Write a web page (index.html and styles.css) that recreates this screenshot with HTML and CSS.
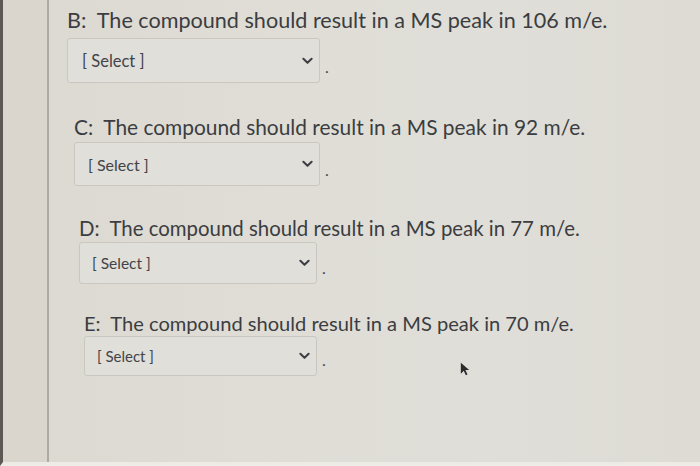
FILE: index.html
```html
<!DOCTYPE html>
<html>
<head>
<meta charset="utf-8">
<link rel="stylesheet" href="styles.css">
</head>
<body>
<div class="screen">
  <div class="gutter"></div>
  <div class="content">
    <div class="question q-b">
      <p class="prompt">B: &nbsp;The compound should result in a MS peak in 106 m/e.</p>
      <div class="answer">
        <div class="select"><span class="select-label">[ Select ]</span><svg class="chevron" viewBox="0 0 12 8" width="11" height="8"><path d="M1.5 1.5 L6 6 L10.5 1.5" fill="none" stroke="#3d3f44" stroke-width="2.2" stroke-linecap="round" stroke-linejoin="round"/></svg></div>
        <span class="period">.</span>
      </div>
    </div>
    <div class="question q-c">
      <p class="prompt">C: &nbsp;The compound should result in a MS peak in 92 m/e.</p>
      <div class="answer">
        <div class="select"><span class="select-label">[ Select ]</span><svg class="chevron" viewBox="0 0 12 8" width="11" height="8"><path d="M1.5 1.5 L6 6 L10.5 1.5" fill="none" stroke="#3d3f44" stroke-width="2.2" stroke-linecap="round" stroke-linejoin="round"/></svg></div>
        <span class="period">.</span>
      </div>
    </div>
    <div class="question q-d">
      <p class="prompt">D: &nbsp;The compound should result in a MS peak in 77 m/e.</p>
      <div class="answer">
        <div class="select"><span class="select-label">[ Select ]</span><svg class="chevron" viewBox="0 0 12 8" width="11" height="8"><path d="M1.5 1.5 L6 6 L10.5 1.5" fill="none" stroke="#3d3f44" stroke-width="2.2" stroke-linecap="round" stroke-linejoin="round"/></svg></div>
        <span class="period">.</span>
      </div>
    </div>
    <div class="question q-e">
      <p class="prompt">E: &nbsp;The compound should result in a MS peak in 70 m/e.</p>
      <div class="answer">
        <div class="select"><span class="select-label">[ Select ]</span><svg class="chevron" viewBox="0 0 12 8" width="11" height="8"><path d="M1.5 1.5 L6 6 L10.5 1.5" fill="none" stroke="#3d3f44" stroke-width="2.2" stroke-linecap="round" stroke-linejoin="round"/></svg></div>
        <span class="period">.</span>
      </div>
    </div>
  </div>
  <svg class="cursor" viewBox="0 0 12 18" width="10" height="15"><path d="M1 1 L1 14 L4.5 10.5 L7 16 L9 15 L6.5 9.5 L11 9.5 Z" fill="#2b2b2e"/></svg>
</div>
</body>
</html>
```
FILE: styles.css
```css
html, body {
  margin: 0;
  padding: 0;
}
body {
  width: 700px;
  height: 466px;
  overflow: hidden;
  background: #dedcd5;
  font-family: Lato, "Open Sans", sans-serif;
  color: #3b3d41;
}
.screen {
  position: relative;
  display: flex;
  width: 700px;
  height: 466px;
  background: linear-gradient(90deg, #dcd9d1 0%, #dfddd6 40%, #e0ded8 70%, #dddbd4 100%);
  border-left: 3px solid #5c5954;
  border-bottom: 4px solid #ecebe6;
  box-sizing: border-box;
}
.gutter {
  width: 44px;
  flex: none;
  border-right: 2px solid #aeaaa2;
  background: #dad6ce;
}
.content {
  flex: 1;
  display: flex;
  flex-direction: column;
}
.prompt {
  margin: 0;
  white-space: nowrap;
}
.answer {
  display: flex;
  align-items: flex-end;
}
.select {
  display: flex;
  align-items: center;
  justify-content: space-between;
  box-sizing: border-box;
  border: 1.5px solid #c9c7c0;
  border-radius: 3px;
  background: #e1dfd9;
}
.select-label {
  color: #424448;
}
.chevron {
  flex: none;
}
.period {
  margin-left: 5px;
  margin-bottom: 8px;
  font-size: 16px;
  line-height: 1;
  color: #46484c;
}
.q-b {
  padding: 5px 0 0 18px;
}
.q-b .prompt {
  font-size: 21.6px;
  line-height: 30px;
}
.q-b .select {
  width: 253px;
  height: 45px;
  margin-top: 3px;
  padding: 0 6px 0 14px;
}
.q-b .select-label { font-size: 16.5px; }

.q-c {
  padding: 30px 0 0 25px;
}
.q-c .prompt {
  font-size: 20.9px;
  line-height: 28px;
}
.q-c .select {
  width: 246px;
  height: 44px;
  margin-top: 1px;
  padding: 0 6px 0 13px;
}
.q-c .select-label { font-size: 16px; }

.q-d {
  padding: 29px 0 0 30px;
}
.q-d .prompt {
  font-size: 20.4px;
  line-height: 27px;
}
.q-d .select {
  width: 238px;
  height: 42px;
  margin-top: 0;
  padding: 0 6px 0 12px;
}
.q-d .select-label { font-size: 15.5px; }

.q-e {
  padding: 26px 0 0 35px;
}
.q-e .prompt {
  font-size: 20.1px;
  line-height: 26px;
}
.q-e .select {
  width: 233px;
  height: 40px;
  margin-top: 0;
  padding: 0 6px 0 12px;
}
.q-e .select-label { font-size: 15px; }

.cursor {
  position: absolute;
  left: 457px;
  top: 362px;
}
```
